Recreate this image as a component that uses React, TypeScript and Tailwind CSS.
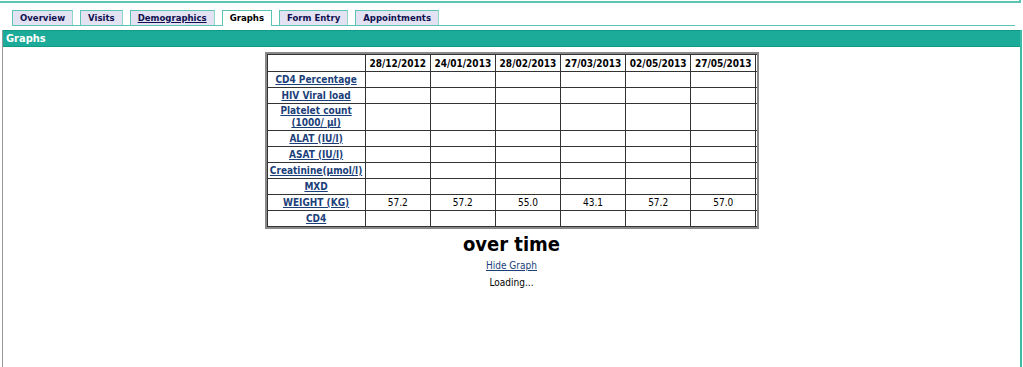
const tabs = [
  { label: "Overview" },
  { label: "Visits" },
  { label: "Demographics", underline: true },
  { label: "Graphs", active: true },
  { label: "Form Entry" },
  { label: "Appointments" },
];

const dates = ["28/12/2012", "24/01/2013", "28/02/2013", "27/03/2013", "02/05/2013", "27/05/2013", "30/06/2013"];

const rows: { label: string; values?: string[]; tall?: boolean }[] = [
  { label: "CD4 Percentage" },
  { label: "HIV Viral load" },
  { label: "Platelet count (1000/ µl)", tall: true },
  { label: "ALAT (IU/l)" },
  { label: "ASAT (IU/l)" },
  { label: "Creatinine(µmol/l)" },
  { label: "MXD" },
  { label: "WEIGHT (KG)", values: ["57.2", "57.2", "55.0", "43.1", "57.2", "57.0", "56.8"] },
  { label: "CD4" },
];

const font = "font-['DejaVu_Sans_Condensed','DejaVu_Sans',sans-serif]";

export default function App() {
  return (
    <div className={`w-[1023px] h-[367px] bg-white overflow-hidden ${font} text-black`}>
      {/* leftover bottom edge of the panel above */}
      <div className="h-[3px] w-[1021px] border-b-2 border-r-2 border-[#5cc4b4]" />

      {/* tabs */}
      <div className="flex items-end gap-[7px] ml-[12px] mr-[8px] mt-[7px] h-[16px] border-b border-[#5cc4b4]">
        {tabs.map((t) => (
          <div
            key={t.label}
            className={`h-[15px] px-[7px] flex items-center text-[9.5px] font-bold border border-b-0 border-[#5cc4b4] ${
              t.active ? "bg-white h-[16px] -mb-px text-black" : "bg-[#e2e2f2] text-[#101050] border-r-[#8fd6cb]"
            } ${t.underline ? "underline" : ""}`}
          >
            {t.label}
          </div>
        ))}
      </div>

      {/* section */}
      <div className="ml-[2px] mr-[1px] mt-[4px] border-l border-l-[#999] border-r-2 border-r-[#3cbca8] h-[340px]">
        <div className="h-[17px] bg-[#1bab98] border-y border-[#0e9a86] text-white text-[11px] font-bold pl-[3px] leading-[15px]">
          Graphs
        </div>

        <div className="flex flex-col items-center pt-[5px]">
          <div className="w-[494px] overflow-hidden border-2 border-[#888]">
            <table className="border-collapse table-fixed w-[555px] border border-[#111] text-[10px]">
              <colgroup>
                <col className="w-[98px]" />
                {dates.map((d) => (
                  <col key={d} className="w-[65px]" />
                ))}
              </colgroup>
              <thead>
                <tr className="h-[17px]">
                  <th className="border border-[#333]" />
                  {dates.map((d) => (
                    <th key={d} className="border border-[#333] font-bold text-center px-0 whitespace-nowrap">
                      {d}
                    </th>
                  ))}
                </tr>
              </thead>
              <tbody>
                {rows.map((r) => (
                  <tr key={r.label} className={r.tall ? "h-[27px]" : "h-[16px]"}>
                    <td className="border border-[#333] text-center font-bold leading-[12px] px-0">
                      <a className="text-[#1c3f7a] underline">{r.label}</a>
                    </td>
                    {dates.map((d, i) => (
                      <td key={d} className="border border-[#333] text-center leading-[12px]">
                        {r.values ? r.values[i] : ""}
                      </td>
                    ))}
                  </tr>
                ))}
              </tbody>
            </table>
          </div>

          <div className="text-[20px] font-bold mt-[3px] leading-[24px]">over time</div>
          <a className="text-[10px] text-[#1c3f7a] underline mt-[3px] leading-[13px]">Hide Graph</a>
          <div className="text-[10px] mt-[4px] leading-[13px]">Loading...</div>
        </div>
      </div>
    </div>
  );
}
